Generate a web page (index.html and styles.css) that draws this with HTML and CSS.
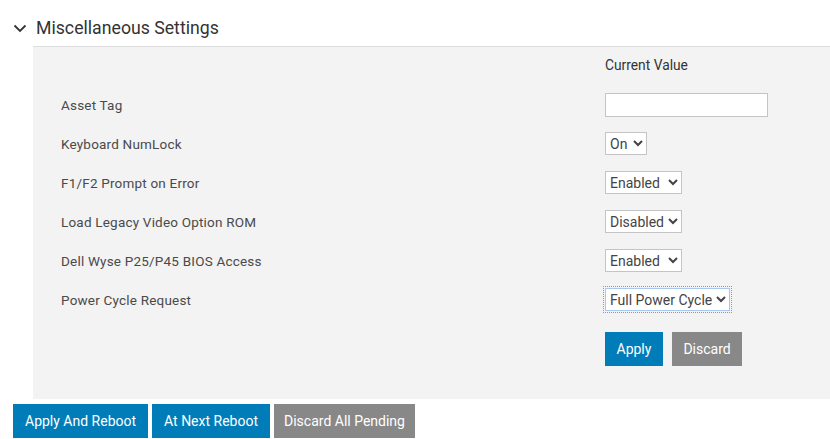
FILE: index.html
```html
<!DOCTYPE html>
<html>
<head>
<meta charset="utf-8">
<link rel="stylesheet" href="styles.css">
</head>
<body>
<div class="section-head">
  <svg class="chev" width="14" height="9" viewBox="0 0 14 9"><path d="M1.5 1.5 L7 7 L12.5 1.5" fill="none" stroke="#333" stroke-width="1.8"/></svg>
  <span class="title">Miscellaneous Settings</span>
</div>
<div class="panel">
  <div class="row head"><span class="label"></span><span class="value cv">Current Value</span></div>
  <div class="row"><span class="label">Asset Tag</span><span class="value"><input class="txt" type="text"></span></div>
  <div class="row"><span class="label">Keyboard NumLock</span><span class="value"><select><option>On</option><option>Off</option></select></span></div>
  <div class="row"><span class="label">F1/F2 Prompt on Error</span><span class="value"><select><option>Enabled</option><option>Disabled</option></select></span></div>
  <div class="row"><span class="label">Load Legacy Video Option ROM</span><span class="value"><select><option>Disabled</option><option>Enabled</option></select></span></div>
  <div class="row"><span class="label">Dell Wyse P25/P45 BIOS Access</span><span class="value"><select><option>Enabled</option><option>Disabled</option></select></span></div>
  <div class="row"><span class="label">Power Cycle Request</span><span class="value"><select class="focus"><option>Full Power Cycle</option><option>None</option></select></span></div>
  <div class="row actions"><span class="label"></span><span class="value btns"><button class="btn blue">Apply</button><button class="btn gray">Discard</button></span></div>
</div>
<div class="footer">
  <button class="btn blue big">Apply And Reboot</button>
  <button class="btn blue big">At Next Reboot</button>
  <button class="btn gray big narrow">Discard All Pending</button>
</div>
</body>
</html>
```
FILE: styles.css
```css
html, body {
  margin: 0;
  padding: 0;
  background: #fff;
  font-family: Roboto, "Liberation Sans", sans-serif;
  color: #444;
}
.section-head {
  height: 46px;
  box-sizing: border-box;
  padding: 16px 0 0 13px;
  display: flex;
  align-items: flex-start;
}
.chev {
  margin-top: 8px;
  margin-right: 9px;
}
.title {
  font-size: 17.7px;
  line-height: 24px;
  color: #333;
}
.panel {
  margin-left: 33px;
  border-top: 1px solid #dddddd;
  background: #f3f3f3;
  height: 352px;
}
.row {
  display: flex;
  align-items: center;
  height: 39px;
}
.row.head {
  height: 38px;
  align-items: flex-start;
  padding-top: 10px;
  box-sizing: border-box;
}
.label {
  width: 572px;
  padding-left: 28px;
  box-sizing: border-box;
  font-size: 13.5px;
  letter-spacing: 0.2px;
  color: #4a4a4a;
  flex: none;
}
.value {
  font-size: 14px;
}
.cv {
  color: #333;
  font-size: 13.8px;
  line-height: 17px;
}
.txt {
  width: 163px;
  height: 24px;
  box-sizing: border-box;
  border: 1px solid #c4c4c4;
  background: #fff;
  margin: 0;
  padding: 0 4px;
  display: block;
}
select {
  font-family: Roboto, "Liberation Sans", sans-serif;
  font-size: 14px;
  color: #444;
  height: 23px;
  border: 1px solid #c4c4c4;
  background: #fff;
  margin: 0;
  display: block;
  border-radius: 0;
}
select.focus {
  border-color: #a8c8f0;
  outline: 1px dotted #999;
  outline-offset: 1px;
}
.actions {
  height: auto;
  margin-top: 13px;
}
.btns {
  display: flex;
  gap: 9px;
}
.btn {
  font-family: Roboto, "Liberation Sans", sans-serif;
  font-size: 14px;
  color: #fff;
  border: none;
  height: 34px;
  padding: 0 11.5px;
  margin: 0;
  border-radius: 0;
  cursor: pointer;
}
.blue { background: #007db8; }
.gray { background: #888888; }
.footer {
  display: flex;
  gap: 4px;
  padding: 5px 0 0 13px;
}
.btn.big {
  padding: 0 12px;
}
.btn.big.narrow {
  padding: 0 10px;
}
```
